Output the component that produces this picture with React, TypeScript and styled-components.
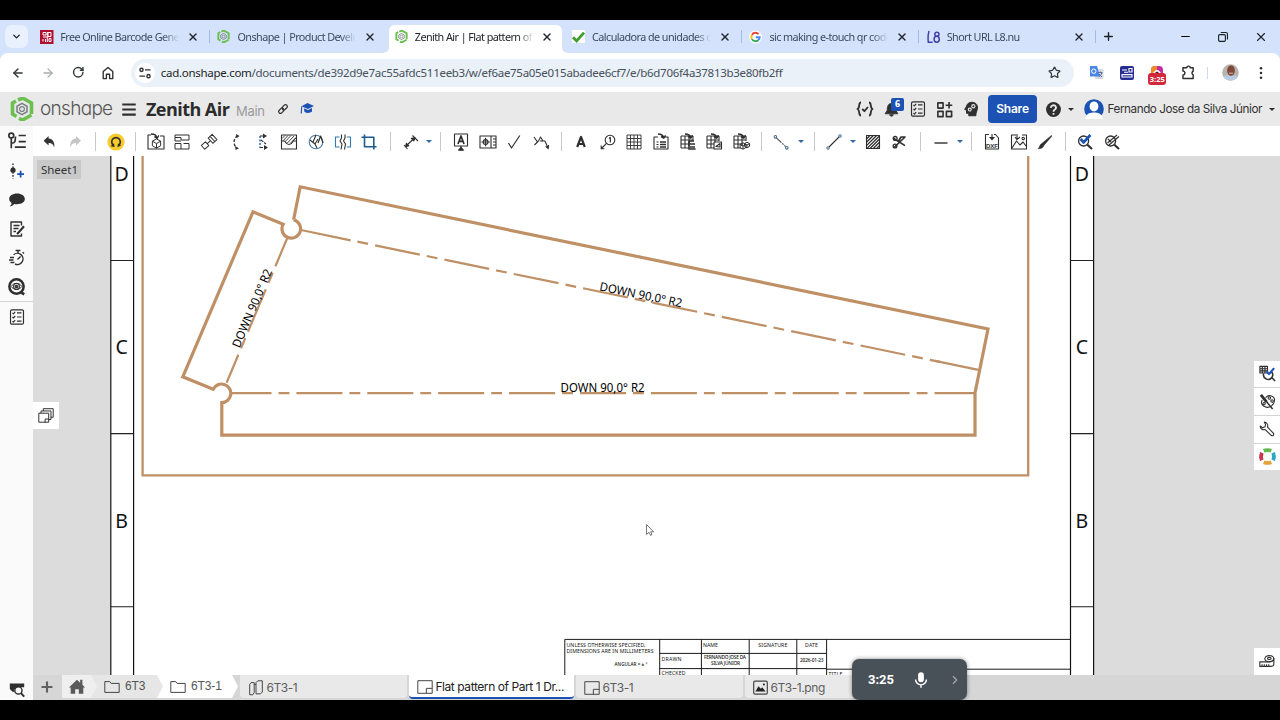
import React from "react";
import styled, { createGlobalStyle } from "styled-components";
import { ArrowLeft, ArrowRight, ChevronDown, ChevronRight, Minus, Plus, RotateCw, Star, X } from "lucide-react";

const INK = "#2f2f2f";
const BLUE = "#1b52b3";
const BROWN = "#bf9065";

const GlobalStyle = createGlobalStyle`
  * { box-sizing: border-box; }
  body { margin: 0; background: #000; font-family: "Noto Sans", "Open Sans", sans-serif; }
`;

/* ---------- shell ---------- */
const Screen = styled.div`
  width: 1280px;
  height: 720px;
  padding: 20px 0;
  background: #000;
  overflow: hidden;
  display: flex;
  flex-direction: column;
`;
const Center = styled.div<{ $w: number; $h?: number }>`
  flex: none;
  width: ${(p) => p.$w}px;
  height: ${(p) => (p.$h ? `${p.$h}px` : "100%")};
  display: flex;
  align-items: center;
  justify-content: center;
`;
const Spacer = styled.div`
  flex: 1;
`;
const Gap = styled.div<{ $w: number }>`
  flex: none;
  width: ${(p) => p.$w}px;
`;

/* ---------- browser tabs ---------- */
const TabStrip = styled.div`
  flex: none;
  height: 33px;
  background: #d4e2fb;
  display: flex;
  align-items: stretch;
`;
const TabSearch = styled.div`
  width: 23px;
  height: 23px;
  margin: 5px 3.6px 0 5px;
  border-radius: 7px;
  background: #e9f1fe;
  display: flex;
  align-items: center;
  justify-content: center;
`;
const BrowserTab = styled.div<{ $active?: boolean; $line?: boolean }>`
  position: relative;
  flex: none;
  width: 177.3px;
  height: 28px;
  margin-top: 5px;
  padding: 0 9px 4px 8.6px;
  display: flex;
  align-items: center;
  color: ${(p) => (p.$active ? "#202327" : "#3c4a5e")};
  &::after {
    content: "";
    position: absolute;
    right: -1px;
    top: 5px;
    width: 1px;
    height: 13px;
    background: ${(p) => (p.$line ? "#a5b9e2" : "transparent")};
  }
`;
const ActiveShape = styled.svg`
  position: absolute;
  left: -5px;
  top: 0;
`;
const TabIcon = styled.span`
  position: relative;
  flex: none;
  width: 14px;
  height: 14px;
  margin-right: 6px;
  display: flex;
`;
const TabText = styled.span`
  position: relative;
  flex: none;
  width: 120px;
  white-space: nowrap;
  font-size: 10.8px;
  letter-spacing: -0.56px;
  line-height: 16px;
  mask-image: linear-gradient(to right, #000 86%, transparent 99%);
`;
const TabClose = styled.span`
  position: relative;
  margin-left: 6.5px;
  width: 12px;
  height: 12px;
  display: flex;
  color: #22272e;
`;

/* ---------- address row ---------- */
const AddressWrap = styled.div`
  flex: none;
  height: 39px;
  background: #d4e2fb;
`;
const AddressRow = styled.div`
  height: 39px;
  background: #fff;
  border-radius: 8px 8px 0 0;
  padding-left: 3px;
  display: flex;
  align-items: center;
  color: #34383c;
`;
const UrlPill = styled.div`
  flex: none;
  width: 943px;
  height: 28px;
  margin-left: 7.8px;
  padding: 0 9px 0 4px;
  border-radius: 14px;
  background: #ebf1f8;
  display: flex;
  align-items: center;
`;
const SiteBadge = styled.div`
  width: 20px;
  height: 20px;
  border-radius: 50%;
  background: #fff;
  margin-right: 6px;
  display: flex;
  align-items: center;
  justify-content: center;
`;
const UrlText = styled.div`
  flex: 1;
  font-size: 11.5px;
  letter-spacing: -0.295px;
  color: #46505a;
  white-space: nowrap;
  b { font-weight: 400; color: #1b1f23; }
`;
const Rule = styled.div<{ $h: number; $c: string; $m?: string }>`
  flex: none;
  width: 1px;
  height: ${(p) => p.$h}px;
  background: ${(p) => p.$c};
  margin: ${(p) => p.$m ?? "0"};
`;
const RecExt = styled.div`
  position: relative;
  flex: none;
  width: 18px;
  height: 18px;
  margin: 0 6px 0 12.5px;
  svg { display: block; margin-top: 2px; }
`;
const RecBadge = styled.span`
  position: absolute;
  left: 0;
  top: 9px;
  width: 18px;
  height: 12px;
  border-radius: 3px;
  background: #d3273c;
  color: #fff;
  font: 700 7.5px/12px "Noto Sans", sans-serif;
  text-align: center;
`;

/* ---------- app header ---------- */
const Header = styled.header`
  flex: none;
  height: 34px;
  background: #e9e9e9;
  padding-left: 10px;
  display: flex;
  align-items: center;
`;
const Wordmark = styled.span`
  flex: none;
  width: 81px;
  padding-left: 6px;
  padding-bottom: 1px;
  font: 300 19px/24px Inter, sans-serif;
  font-feature-settings: "cv11";
  letter-spacing: -0.7px;
  color: #555;
`;
const DocTitle = styled.span`
  flex: none;
  width: 91px;
  margin-left: -5px;
  padding-left: 8px;
  white-space: nowrap;
  font: 700 18px/24px "Open Sans", sans-serif;
  letter-spacing: -0.55px;
  color: #2b2b2b;
`;
const Branch = styled.span`
  flex: none;
  width: 41px;
  padding-top: 3px;
  font: 400 13px/18px Inter, sans-serif;
  letter-spacing: -0.3px;
  color: #9b9b9b;
`;
const ShareButton = styled.div`
  flex: none;
  width: 49px;
  height: 28px;
  border-radius: 4px;
  background: ${BLUE};
  color: #fff;
  font: 600 12px/28px Inter, sans-serif;
  letter-spacing: -0.2px;
  text-align: center;
`;
const BellBox = styled.div`
  position: relative;
  flex: none;
  width: 26px;
  height: 34px;
  display: flex;
  align-items: center;
  justify-content: center;
`;
const BellCount = styled.span`
  position: absolute;
  left: 13px;
  top: 6px;
  width: 13px;
  height: 13px;
  border-radius: 2px;
  background: ${BLUE};
  color: #fff;
  font: 700 8px/13px "DejaVu Sans", sans-serif;
  text-align: center;
`;
const UserName = styled.span`
  flex: none;
  width: 156px;
  font: 400 11.7px/18px Inter, sans-serif;
  letter-spacing: -0.43px;
  white-space: nowrap;
  color: #333;
`;

/* ---------- workspace ---------- */
const Workspace = styled.div`
  flex: 1;
  min-height: 0;
  display: flex;
`;
const Rail = styled.nav`
  flex: none;
  width: 33px;
  background: #fafafa;
  display: flex;
  flex-direction: column;
  align-items: center;
`;
const RailRule = styled.div`
  width: 33px;
  height: 1px;
  background: #d2d2d2;
`;
const Main = styled.main`
  flex: 1;
  min-width: 0;
  display: flex;
  flex-direction: column;
`;
const Toolbar = styled.div`
  flex: none;
  height: 30px;
  padding: 1px 0 0 2.8px;
  background: #fff;
  display: flex;
  align-items: center;
`;
const SepCell = styled.div<{ $w: number }>`
  flex: none;
  width: ${(p) => p.$w}px;
  height: 19px;
  display: flex;
  justify-content: center;
  &::before {
    content: "";
    width: 1px;
    background: #c9c9c9;
  }
`;
const Triangle = styled.i<{ $c: string; $s: number }>`
  border: ${(p) => p.$s}px solid transparent;
  border-bottom: 0;
  border-top-color: ${(p) => p.$c};
`;
const Canvas = styled.section`
  position: relative;
  flex: 1;
  min-height: 0;
  background: #dcdcdc;
`;
const Drawing = styled.svg`
  display: block;
`;
const SheetTag = styled.div`
  position: absolute;
  left: 4px;
  top: 4px;
  width: 44px;
  height: 19px;
  padding-left: 1px;
  background: #c9c9c9;
  color: #333;
  font: 400 11.5px/20px "Noto Sans", sans-serif;
  text-align: center;
`;
const Dock = styled.div<{ $left?: boolean; $top: number }>`
  position: absolute;
  ${(p) => (p.$left ? "left: 0;" : "right: 0;")}
  top: ${(p) => p.$top}px;
  width: 26px;
  display: flex;
  flex-direction: column;
  gap: 1px;
  background: #d4d4d4;
`;
const DockTile = styled.div`
  height: 26.7px;
  background: #fff;
  display: flex;
  align-items: center;
  justify-content: center;
`;

/* ---------- document tabs ---------- */
const DocBar = styled.footer`
  flex: none;
  height: 25px;
  background: #d6d6d6;
  display: flex;
`;
const Crumb = styled.div<{ $w: number; $bg: string; $first?: boolean; $z: number }>`
  position: relative;
  z-index: ${(p) => p.$z};
  flex: none;
  width: ${(p) => p.$w}px;
  margin-right: -6px;
  height: 23px;
  background: ${(p) => p.$bg};
  clip-path: polygon(0 0, calc(100% - 6px) 0, 100% 50%, calc(100% - 6px) 100%, 0 100%);
  padding-left: ${(p) => (p.$first ? 6 : 12)}px;
  display: flex;
  align-items: center;
  gap: 4px;
  font: 400 12px/20px "Liberation Sans", sans-serif;
  letter-spacing: -0.1px;
  color: #555;
`;
const CrumbLabel = styled.span`
  padding-bottom: 2px;
`;
const DocTab = styled.div<{ $w: number; $active?: boolean; $ml: number }>`
  flex: none;
  width: ${(p) => p.$w}px;
  height: ${(p) => (p.$active ? 24 : 23)}px;
  margin-left: ${(p) => p.$ml}px;
  padding: ${(p) => (p.$active ? "2px 0 0 7px" : "2px 0 0 7px")};
  display: flex;
  align-items: center;
  gap: 1.4px;
  white-space: nowrap;
  border-radius: 0 0 4px 4px;
  background: ${(p) => (p.$active ? "#fff" : "#e9e9e9")};
  border-bottom: ${(p) => (p.$active ? `2px solid ${BLUE}` : "0")};
  color: ${(p) => (p.$active ? "#222" : "#5d5d5d")};
  font: 400 12px/20px Inter, sans-serif;
  letter-spacing: -0.42px;
`;
const Recorder = styled.div`
  position: absolute;
  z-index: 9;
  left: 819px;
  top: 503px;
  width: 115px;
  height: 41px;
  border-radius: 7px;
  background: #485058;
  box-shadow: 0 0 4px rgba(0, 0, 0, 0.45);
  display: flex;
  align-items: center;
  color: #fff;
  font: 700 13px/20px Roboto, sans-serif;
`;
const RecTime = styled.span`
  flex: none;
  width: 58px;
  padding-left: 16px;
`;

/* ---------- glyphs ---------- */
type GlyphProps = { s?: number; w?: number; c?: string; children: React.ReactNode };
const Glyph = ({ s = 20, w = 1.1, c = INK, children }: GlyphProps) => (
  <svg width={s} height={s} viewBox="-10 -10 20 20" fill="none" stroke={c} strokeWidth={w} strokeLinejoin="round">
    {children}
  </svg>
);
const Caret = ({ w, c = "#2f6aa5", s = 3.5 }: { w: number; c?: string; s?: number }) => (
  <Center $w={w} $h={20}>
    <Triangle $c={c} $s={s} />
  </Center>
);
const OnshapeMark = ({ s }: { s: number }) => (
  <svg width={s} height={s} viewBox="-12 -12 24 24" fill="none">
    <path d="M-4 -9 L0.5 -11 L9.5 -6 V5" stroke="#6cc04f" strokeWidth="3.6" />
    <path d="M9.5 6 L0.5 11 L-3 9.3" stroke="#6cc04f" strokeWidth="3.6" />
    <path d="M-5.5 7.5 L-9.5 5 V-6 L-6 -8" stroke="#6cc04f" strokeWidth="3.6" />
    <path d="M0 -5.6 L5 -2.8 V2.8 L0 5.6 L-5 2.8 V-2.8Z" stroke="#7b8288" strokeWidth="1.6" />
    <circle r="2.4" stroke="#7b8288" strokeWidth="1.3" />
  </svg>
);
const Cube = ({ x = 0, y = 0, r = 4 }: { x?: number; y?: number; r?: number }) => (
  <path
    transform={`translate(${x} ${y}) scale(${r})`}
    strokeWidth={1 / r}
    d="M0 -1 L.9 -.5 V.5 L0 1 L-.9 .5 V-.5Z M-.9 -.5 L0 0 L.9 -.5 M0 0 V1"
  />
);
const GridLines = () => <path d="M-7 -6 H5 M-7 -2 H5 M-7 2 H2 M-7 6 H0 M-7 -6 V6 M-3 -6 V6 M1 -6 V4 M5 -6 V-1" />;
const InArrow = () => <path d="M-3 -8 C0 -8 2 -7 2.5 -4.5 M0 -5.5 L2.8 -3.8 L4.6 -6.6" strokeWidth="1.5" />;
const PageCorner = () => (
  <Glyph s={18} w={1.1} c="#444">
    <path d="M-8 -7 H8 V7 H-8Z M1.5 7 V1.5 H8" />
  </Glyph>
);
const Folder = () => (
  <Glyph s={18} w={1.1} c="#444">
    <path d="M-8 6 V-6 H-2.5 L-1 -4 H8 V6Z" />
  </Glyph>
);

const tool = {
  undo: <Glyph><path fill="#333" stroke="none" d="M-5.4 -1.2 L-.4 -6 V-3.4 C3.6 -3.2 6 .5 5.2 5.4 C4.1 2 2.6 .9 -.4 1 V3.6Z" /></Glyph>,
  redo: <Glyph><path fill="#c4c4c4" stroke="none" d="M5 -1.2 L0 -6 V-3.4 C-4 -3.2 -6.4 .5 -5.6 5.4 C-4.5 2 -3 .9 0 1 V3.6Z" /></Glyph>,
  update: (
    <Glyph>
      <circle r="8.6" fill="#f6cb2a" stroke="none" />
      <path d="M-2.4 3.4 A4.3 4.3 0 1 1 2.4 3.4" strokeWidth="1.7" />
      <path d="M-5.4 4.2 L-1.4 5 L-2 1.2Z M1.4 5.2 L2 1.4 L5 3.6Z" fill={INK} stroke="none" />
    </Glyph>
  ),
  insertView: <Glyph><path d="M-5 -7 H-8 V7 H8 V-6 H4" /><Cube x={0.5} y={1.5} r={4.6} /><path d="M-5 -8 C-1 -8 0 -7 1 -4 M-1.6 -5.4 L1.2 -3.6 L2.8 -6.6" strokeWidth="1.3" /></Glyph>,
  projected: <Glyph w={1}><path d="M-7 -7 H7 V-2 H-1 V-4.5 H-7Z M-7 -4.5 V-1 H-1 M-7 1.5 H-1 V7 H-7Z M1.5 1.5 H7 V7 H-1" /></Glyph>,
  auxiliary: <Glyph w={1}><g transform="rotate(-42)"><path d="M-8 -2.5 H-2.5 V2.5 H-8Z M2 -3.5 H7.5 V3.5 H2Z M-2 0 H2 M4.6 -3.5 V3.5" /></g></Glyph>,
  section: <Glyph><path d="M2 -6 C-3 -5 -3 4 1 6" strokeDasharray="3 1.6" strokeWidth="1.3" /><path d="M0 -8 L3.5 -6 L.5 -3.8Z M-1 4.2 L3 6.2 L-.4 8Z" fill={INK} stroke="none" /></Glyph>,
  sectionAligned: <Glyph><path d="M-3 -6 V6" stroke={BLUE} strokeWidth="1.3" strokeDasharray="2 1.5" /><path d="M-3 -6 H1 M-3 5.5 H1 M-2 -2 L3 2" strokeDasharray="3 1" strokeWidth="1.1" /><path d="M0 -8.4 L4 -6 L0 -3.6Z M1 3 L5 5.6 L1 8Z" fill={INK} stroke="none" /></Glyph>,
  broken: <Glyph><path d="M-7.5 -7 H7.5 V7 H-7.5Z M-7.5 -1 H-4.5 C-3.5 -1 -3.5 2.5 0 2.5 C3.5 2.5 3.5 -1 4.5 -1 H7.5" /><path d="M-7 -3.5 L-4 -6.5 M-6 -1.2 L-1 -6.5 M-3.6 -.6 L2 -6.5 M-2 1.4 L5 -6 M1 1.6 L7 -4.6 M4 -1 L7 -4" strokeWidth=".9" /></Glyph>,
  detail: <Glyph><circle r="6.8" stroke="#4a7fa5" /><path d="M-6 -2 L-1 2 L2 -3 M0 -7 L-3 0 M-1 2 L1 6" /><path d="M2 1 L4.6 -6 L7 1" strokeWidth="1.2" /></Glyph>,
  breakView: <Glyph><path d="M-1.5 -7.5 V-4 L-3 -1 L-1 2 L-2 7.5 M2 -7.5 V-4 L.5 -1 L2.5 2 L1.5 7.5" /><path d="M-3.4 -5 H-7.5 V5 H-3.4 M3.8 -5 H7.5 V5 H3.8" stroke="#2c7ab5" /></Glyph>,
  crop: <Glyph><path d="M-4.5 -7.5 V4.8 H7.5 M-7.5 -4.8 H4.8 V7.5" stroke="#1d5c92" strokeWidth="1.6" /></Glyph>,
  dimension: <Glyph><path d="M-4.5 3.5 L3 -3.5 M-7 3 L-3.5 7 M1.5 -6.5 L7 -1" /><path d="M-5.4 4.6 L-4.6 1.4 L-2.2 3.8Z M4 -4.2 L.4 -3.6 L2.8 -1.2Z" fill={INK} /></Glyph>,
  note: <Glyph><path d="M-6.5 -8 H6.5 V4 H-6.5Z M0 4 V7" /><path d="M-3 2 L0 -6 L3 2 M-2 -.6 H2" strokeWidth="1.7" /><path d="M-2.4 8.2 L0 5.4 L2.4 8.2Z" fill={INK} /></Glyph>,
  gdt: <Glyph><path d="M-8 -6 H8 V6 H-8Z M3 -6 V6 M-6.5 0 H1.8 M-2.4 -4.2 V4.2 M5 -3 H8 M5 0 H8 M5 3 H8" /><circle cx="-2.4" r="2.4" /></Glyph>,
  surface: <Glyph><path d="M-5.5 1 L-2.5 6 L5.8 -6.5" strokeWidth="1.2" /></Glyph>,
  weld: <Glyph><path d="M-7 -5 L-3.5 0 L-6.5 3 M-3.5 0 C-2 -1 -1 -4 -.5 -5 L2 -1 M-1 -1 H4 L7 6 M4.6 4.4 L7.2 6.6 L7.6 3" /></Glyph>,
  text: <Glyph><path d="M-3.8 5 L0 -5 L3.8 5 M-2.6 2 H2.6" strokeWidth="2.2" /></Glyph>,
  balloon: <Glyph><circle cx="2" cy="-2" r="4.8" /><path d="M-1.6 1.4 L-6.5 6.5 M-6.8 3.6 V6.8 H-3.6" /><path d="M1 -3.6 L2.3 -4.6 V.6" strokeWidth="1.2" /></Glyph>,
  table: <Glyph w={0.9}><path d="M-7 -7 H7 V7 H-7Z M-7 -3.5 H7 M-7 0 H7 M-7 3.5 H7 M-3.5 -7 V7 M0 -7 V7 M3.5 -7 V7" /></Glyph>,
  bom: <Glyph><path d="M-3 -5 H-7 V7 H7 V-5 H4 M-4.5 0 H-2.5 M-4.5 2.5 H-2.5 M-4.5 5 H-2.5" /><path d="M-1 0 H5 M-1 2.5 H5 M-1 5 H5" strokeWidth="1.6" /><InArrow /></Glyph>,
  holeTable: <Glyph><GridLines /><InArrow /><path d="M1 -1 H6 M2 2 H7 M2 5 H7 M1 -1 V7 H7.6" strokeWidth="1.7" /></Glyph>,
  bendTable: <Glyph><GridLines /><InArrow /><path d="M0 0 H7.5 V7 H0Z" fill="#fff" /><path d="M2 4.5 L6 1.5 V5Z" /></Glyph>,
  partTable: <Glyph><GridLines /><InArrow /><Cube x={2} y={4} r={3.2} /><Cube x={6} y={3} r={2.8} /></Glyph>,
  centerline: <Glyph c="#4a6f8c"><path d="M-4.6 -4.2 L4.6 4.6" stroke="#444" strokeDasharray="7 1.2 1.6 1.2" /><circle cx="-5.6" cy="-5.2" r="1.3" /><circle cx="5.8" cy="5.8" r="1.3" /></Glyph>,
  line: <Glyph><path d="M-5 5 L5 -5" /><circle cx="-6" cy="6" r="1.2" stroke="#4a6f8c" /><circle cx="6" cy="-6" r="1.2" stroke="#4a6f8c" /></Glyph>,
  hatch: <Glyph><path d="M-6.5 -6.5 H6.5 V6.5 H-6.5Z" /><path d="M-6.5 -3 L-3 -6.5 M-6.5 .3 L.3 -6.5 M-6.5 3.6 L3.6 -6.5 M-6 6.4 L6.4 -6 M-3 6.5 L6.5 -3 M.3 6.5 L6.5 .3 M3.6 6.5 L6.5 3.6" strokeWidth="1.3" /></Glyph>,
  trim: <Glyph><path d="M-6 -4 L6 3.6 M-5 5.5 L6 -5 H2 L-1 0" strokeWidth="1.7" /><circle cx="-3.8" cy="-3.6" r="1.9" strokeWidth="1.3" /><circle cx="-4" cy="4" r="1.9" strokeWidth="1.3" /></Glyph>,
  stroke: <Glyph><path d="M-6.5 1 H6.5" strokeWidth="1.4" /></Glyph>,
  dxf: (
    <Glyph>
      <path d="M-3 -7.5 H-6.5 V7 H6.5 V-4 L3.5 -7.5 H2 M0 -8 V-3" strokeWidth="1.1" />
      <path d="M-3 -5 H3 L0 -1.4Z" fill={INK} stroke="none" />
      <text x="0" y="5.6" textAnchor="middle" fontFamily="Liberation Sans" fontWeight="700" fontSize="6" fill={INK} stroke="none">DXF</text>
    </Glyph>
  ),
  image: <Glyph><path d="M-3 -7 H-7.5 V7 H7.5 V-7 H3 M-7 6 L-2.5 -1 L1 3 L4 0 L7 4 M-2 -8 V-3 M-4 -5 L-2 -2.4 L1 -5" /><circle cx="4.2" cy="-3.6" r="1.2" /></Glyph>,
  brush: <Glyph><path d="M-7 6.6 C-5 5.5 -5.5 2.5 -3.2 1.6 L6.5 -6.6 L7 -6 L-1 3.2 C-2 6.4 -5 6.8 -7 6.6Z" fill={INK} strokeWidth=".6" /></Glyph>,
  inspect: <Glyph><circle cx="-1.4" cy="-1" r="5" strokeWidth="1.3" /><path d="M2.4 2.8 L7 7" strokeWidth="2.2" /><path d="M-4.4 -3 L-1.4 .4 L5.4 -7" stroke={BLUE} strokeWidth="2.8" /></Glyph>,
  inspectHide: <Glyph><circle cx="-1.4" cy="-1" r="5" strokeWidth="1.3" /><path d="M2.4 2.8 L7 7" strokeWidth="2.2" /><path d="M-4.5 1 L5 -7 M-3 3 L7 -5.5 M-4 -3 L-1 0" strokeWidth="1.2" /></Glyph>,
};

type ToolItem = keyof typeof tool | "|" | "||" | number;
const toolbarItems: ToolItem[] = [
  "undo", "redo", "|", "update", "|",
  "insertView", "projected", "auxiliary", "section", "sectionAligned", "broken", "detail", "breakView", "crop", "||",
  "dimension", 10, "|", "note", "gdt", "surface", "weld", "|",
  "text", "balloon", "table", "bom", "holeTable", "bendTable", "partTable", "|",
  "centerline", 13.2, "|", "line", 11.6, "hatch", "trim", "||", "stroke", 10.9, "|",
  "dxf", "image", "brush", "|", "inspect", "inspectHide",
];
const renderTool = (it: ToolItem, i: number) => {
  if (it === "|" || it === "||") return <SepCell key={i} $w={it === "|" ? 13.3 : 15} />;
  if (typeof it === "number") return <Caret key={i} w={it} />;
  return <Center key={i} $w={26.7} $h={28}>{tool[it]}</Center>;
};

const rail = {
  tree: <Glyph s={22} w={1.5}><circle cx="-5.2" cy="-5" r="2.2" /><path d="M-5.2 -2.8 V6.5 M-5.2 2 C-1.6 2 -1.4 0 -1.4 -4 M1.5 -5 H8 M1.5 .5 H8 M-2 5.5 H8" /></Glyph>,
  addPoint: <Glyph s={20} w={1.4}><path d="M-4 -7.5 V7.5" strokeDasharray="1.6 1.3" /><circle cx="-4" cy="-.8" r="2.6" fill={INK} stroke="none" /><path d="M3.6 -.2 V6.6 M.2 3.2 H7" stroke={BLUE} strokeWidth="1.8" /></Glyph>,
  chat: <Glyph s={20}><path d="M0 -6.5 C4.5 -6.5 7.8 -4.2 7.8 -1 C7.8 2.2 4.5 4.2 0 4.2 C-1 4.2 -2 4.1 -2.8 3.9 C-4 5.3 -5.6 6.2 -7.4 6.3 C-6 5 -5.4 4 -5.4 2.9 C-7 1.9 -7.8 .6 -7.8 -1 C-7.8 -4.2 -4.5 -6.5 0 -6.5Z" fill={INK} stroke="none" /></Glyph>,
  edit: <Glyph s={20} w={1.4}><path d="M4.5 -3.5 V-7 H-6 V7 H4.5 V4.5 M-3.5 -3.5 H2.5 M-3.5 -.5 H1.5 M-3.5 2.5 H-1" /><path d="M7 -2.8 L1.5 3.6 L0 5" strokeWidth="2.2" /></Glyph>,
  timer: <Glyph s={20} w={1.4}><path d="M-3.4 -3.2 A5.6 5.6 0 1 1 -2 6 M1 -5 V-7.5 M-1.4 -7.5 H3.4 M5.6 -5.8 L7 -4.4 M.5 1.5 L3.6 -1.4 M-7 -.5 H-3 M-8 2 H-3.5 M-6.5 4.5 H-2.6" /></Glyph>,
  view: <Glyph s={21} w={1.4}><circle r="6.8" strokeWidth="2.4" /><path d="M4 5.6 L7.4 7.4" strokeWidth="2.6" /><circle r="2.8" strokeWidth="1" /><circle r="1" /><path d="M-5 0 C-3 -4 3 -4 5 0 C3 3.6 -3 3.6 -5 0" strokeWidth=".9" /></Glyph>,
  list: <Glyph s={18} w={1.3}><rect x="-7.2" y="-8" width="14.4" height="16" rx="1.6" /><path d="M-5 -4.5 L-4 -3.4 L-2 -5.6 M-5 0 L-4 1.1 L-2 -1.1 M-5 4.5 L-4 5.6 L-2 3.4 M0 -4.5 H5 M0 0 H5 M0 4.5 H5" /></Glyph>,
  find: <Glyph s={18}><path d="M-8 -6 H8 V-2 H4 V0 H-3 V3 H-5 L-8 0Z" fill={INK} stroke="none" /><circle cx="1.6" cy="1.6" r="4" fill="#fafafa" strokeWidth="1.6" /><path d="M4.4 4.6 L8 8.4" strokeWidth="2.2" /></Glyph>,
};

/* ---------- browser chrome ---------- */
const favicon = {
  barcode: <svg width="14" height="14" viewBox="0 0 14 14"><rect width="13.5" height="14" fill="#b01030" /><path d="M3 2.5H6V5H3ZM8 2.5H11V6.5H8ZM3 7H7M9 8.5H11V11.5H9ZM3 9V11.5M5.5 9V12M7.3 2V12" stroke="#fff" fill="none" /></svg>,
  onshape: <OnshapeMark s={13} />,
  check: <svg width="14" height="14" viewBox="0 0 14 14"><rect width="13" height="13" fill="#fff" /><path d="M1 7.2 L4.6 11 L12 2.6" stroke="#3f9e2c" strokeWidth="2.8" fill="none" /></svg>,
  google: (
    <svg width="14" height="14" viewBox="0 0 14 14">
      <circle cx="6.5" cy="7" r="6.5" fill="#fff" />
      <g fill="none" strokeWidth="1.9">
        <path d="M9.6 4.1 A4.2 4.2 0 0 0 2.9 4.9" stroke="#e94335" />
        <path d="M2.9 4.9 A4.2 4.2 0 0 0 2.9 9.1" stroke="#fbbc05" />
        <path d="M2.9 9.1 A4.2 4.2 0 0 0 9.3 10.2" stroke="#34a853" />
        <path d="M9.3 10.2 A4.2 4.2 0 0 0 10.7 7.2 H6.8" stroke="#4285f4" />
      </g>
    </svg>
  ),
  l8: <svg width="15" height="14" viewBox="0 0 15 14" fill="none" stroke="#4340a8" strokeWidth="1.6" strokeLinecap="round"><path d="M2 1 C1 5 1 9 1.4 12.6 H5.5" /><circle cx="10.6" cy="4" r="2.2" /><ellipse cx="10.4" cy="9.4" rx="2.8" ry="3.1" /></svg>,
};
const browserTabs: { icon: keyof typeof favicon; title: string; active?: boolean; line?: boolean }[] = [
  { icon: "barcode", title: "Free Online Barcode Gener", line: true },
  { icon: "onshape", title: "Onshape | Product Develop" },
  { icon: "onshape", title: "Zenith Air | Flat pattern of P", active: true },
  { icon: "check", title: "Calculadora de unidades d", line: true },
  { icon: "google", title: "sic making e-touch qr code", line: true },
  { icon: "l8", title: "Short URL L8.nu", line: true },
];

const Browser = () => (
  <>
    <TabStrip>
      <TabSearch><ChevronDown size={11} strokeWidth={3} color="#1c2026" /></TabSearch>
      {browserTabs.map((t) => (
        <BrowserTab key={t.title} $active={t.active} $line={t.line}>
          {t.active && (
            <ActiveShape width="188" height="28" viewBox="0 0 188 28">
              <path d="M0 28 C6 28 8 26 8 21 V7 C8 2 10 0 15 0 H174 C179 0 181 2 181 7 V21 C181 26 183 28 188 28Z" fill="#fff" />
            </ActiveShape>
          )}
          <TabIcon>{favicon[t.icon]}</TabIcon>
          <TabText>{t.title}</TabText>
          <TabClose><X size={12} strokeWidth={2.8} /></TabClose>
        </BrowserTab>
      ))}
      <Center $w={27}><Plus size={13} strokeWidth={2.6} color="#1c2026" /></Center>
      <Spacer />
      <Center $w={38}><Minus size={13} strokeWidth={2.2} /></Center>
      <Center $w={38}>
        <Glyph s={16} w={1.4} c="#1c2026"><rect x="-5.5" y="-3" width="8.5" height="8.5" rx="1.6" /><path d="M-2.8 -5.6 H3.4 Q5.6 -5.6 5.6 -3.4 V3" /></Glyph>
      </Center>
      <Center $w={38}><X size={14} strokeWidth={1.9} color="#1c2026" /></Center>
    </TabStrip>
    <AddressWrap>
      <AddressRow>
        <Center $w={30}><ArrowLeft size={14} strokeWidth={2.5} /></Center>
        <Center $w={30}><ArrowRight size={14} strokeWidth={2.2} color="#a9adb1" /></Center>
        <Center $w={30}><RotateCw size={12.5} strokeWidth={2.8} /></Center>
        <Center $w={30}>
          <Glyph s={16} w={1.7}><path d="M-6 7 V-2 L0 -7 L6 -2 V7 H2 V1.5 H-2 V7Z" /></Glyph>
        </Center>
        <UrlPill>
          <SiteBadge>
            <Glyph s={14} w={2}><circle cx="-5" cy="-4.5" r="2.3" /><path d="M0 -4.5 H8 M-8 4.5 H0" /><circle cx="5" cy="4.5" r="2.3" /></Glyph>
          </SiteBadge>
          <UrlText><b>cad.onshape.com</b>/documents/de392d9e7ac55afdc511eeb3/w/ef6ae75a05e015abadee6cf7/e/b6d706f4a37813b3e80fb2ff</UrlText>
          <Center $w={20}><Star size={13} strokeWidth={2.2} /></Center>
        </UrlPill>
        <Center $w={45}>
          <svg width="15" height="15" viewBox="0 0 15 15">
            <rect x="6" y="4" width="8.5" height="10" rx="1" fill="#d6dbe3" />
            <path d="M1 1H8L11 11.5H1Z" fill="#4a86e8" />
            <circle cx="4.8" cy="6.2" r="2.2" stroke="#fff" fill="none" />
            <path d="M9 7.5H13.5M11.2 6.5V7.5M12.8 8C12 10.5 10.5 11.5 9.8 12M10 9L13 12" stroke="#5b6f95" fill="none" />
          </svg>
        </Center>
        <Center $w={17}>
          <svg width="14" height="14" viewBox="0 0 14 14"><rect width="14" height="14" rx="2" fill="#262c92" /><path d="M2 4H7M2 8.6H12V11H2ZM9 2.5H12V6H9ZM4 6.3H8" stroke="#fff" fill="none" strokeWidth="1.1" /></svg>
        </Center>
        <RecExt>
          <svg width="18" height="10" viewBox="0 0 18 10"><path d="M3 10V4Q3 0 7 0H11Q15 0 15 4V10Z" fill="#c32aa3" /><path d="M3 10V4Q3 0 7 0H9V10Z" fill="#f08a24" /><path d="M4 9Q9 -1 14 9Z" fill="#fff" /><path d="M6 9Q9 2 12 9Z" fill="#222" /></svg>
          <RecBadge>3:25</RecBadge>
        </RecExt>
        <Center $w={33}>
          <Glyph s={17} w={1.7}><path d="M-6.5 -5.5 H-2 A2 2 0 0 1 2 -5.5 H5.5 V-1.5 A2.2 2.2 0 0 0 5.5 2.6 V7 H-6.5 V3 A2.3 2.3 0 0 0 -6.5 -1.6Z" /></Glyph>
        </Center>
        <Rule $h={12} $c="#c9d7ef" $m="0 14px 0 2px" />
        <svg width="17" height="17" viewBox="0 0 17 17">
          <clipPath id="face"><circle cx="8.5" cy="8.5" r="8.3" /></clipPath>
          <g clipPath="url(#face)">
            <rect width="17" height="17" fill="#b9b3ae" />
            <path d="M0 17 C0 11 5 10.5 8.5 12 C12 10.5 17 11 17 17Z" fill="#b7cbe2" />
            <ellipse cx="9" cy="6.5" rx="3.9" ry="5.2" fill="#7d4a3a" />
            <path d="M7 9.2H11" stroke="#d9b8a8" />
          </g>
        </svg>
        <Spacer />
        <Center $w={38}>
          <Glyph s={16}><g fill={INK} stroke="none"><circle cy="-6" r="1.6" /><circle r="1.6" /><circle cy="6" r="1.6" /></g></Glyph>
        </Center>
      </AddressRow>
    </AddressWrap>
  </>
);

const AppHeader = () => (
  <Header>
    <OnshapeMark s={24} />
    <Wordmark>onshape</Wordmark>
    <Center $w={28}><Glyph s={18} w={2.4}><path d="M-7.5 -5 H7.5 M-7.5 .6 H7.5 M-7.5 6.2 H7.5" /></Glyph></Center>
    <DocTitle>Zenith Air</DocTitle>
    <Gap $w={7} />
    <Branch>Main</Branch>
    <Center $w={12}>
      <Glyph s={16} w={2}><g transform="rotate(-45)"><rect x="-9" y="-3" width="10" height="6" rx="3" /><rect x="-1" y="-3" width="10" height="6" rx="3" /></g></Glyph>
    </Center>
    <Center $w={35}>
      <svg width="14" height="14" viewBox="0 0 14 14" fill={BLUE}><path d="M7.5 1 L14 4 L8 7 L1.5 4.2Z" /><path d="M4 6.2 L8 8 L12 6 V9.6 C10 11.4 6.5 11.4 4.4 9.8Z" /><path d="M1.8 4.4 L1.2 11.5" stroke={BLUE} strokeWidth="1.1" /></svg>
    </Center>
    <Spacer />
    <Center $w={27}>
      <Glyph s={20} w={1.8}><path d="M-4 -6.5 C-7 -6.5 -4.6 -1 -7.6 0 C-4.6 1 -7 6.5 -4 6.5 M4 -6.5 C7 -6.5 4.6 -1 7.6 0 C4.6 1 7 6.5 4 6.5 M-2.8 0 L-.6 2.2 L3 -2" /></Glyph>
    </Center>
    <BellBox>
      <Glyph s={17}><path d="M0 -7 C4.5 -7 4.8 -3 5 1 L7.5 5 H-7.5 L-5 1 C-4.8 -3 -4.5 -7 0 -7Z M-2.2 6.2 H2.2 A2.3 2.3 0 0 1 -2.2 6.2Z" fill={INK} /></Glyph>
      <BellCount>6</BellCount>
    </BellBox>
    <Center $w={27}>{rail.list}</Center>
    <Center $w={27}><Glyph s={19} w={1.7}><path d="M-7 -7 H-1.5 V-1.5 H-7Z M-7 2 H-1.5 V7.5 H-7Z M2 2 H7.5 V7.5 H2Z M4.8 -8 V-1 M1.2 -4.5 H8.2" /></Glyph></Center>
    <Center $w={26}>
      <Glyph s={18}><path d="M1 -7.5 C6 -7.5 8 -3.5 7 .5 C6.6 2.5 5.4 3.6 5.4 7.5 H-2.5 V4.8 H-5 V1.5 L-7 .5 L-5 -3 C-4.4 -6 -2 -7.5 1 -7.5Z" fill={INK} /><circle cx="2.6" cy="-3" r="1.8" stroke="#e9e9e9" strokeWidth="1.3" /><circle cx="-1.4" cy=".6" r="1.6" stroke="#e9e9e9" strokeWidth="1.3" /></Glyph>
    </Center>
    <Gap $w={4} />
    <ShareButton>Share</ShareButton>
    <Center $w={33}>
      <Glyph s={19}><circle r="7.8" fill={INK} stroke="none" /><path d="M-2.6 -1.8 A2.6 2.4 0 1 1 1.4 0 C.2 .7 0 1 0 2.4 M0 3.6 V5.4" stroke="#e9e9e9" strokeWidth="1.9" /></Glyph>
    </Center>
    <Caret w={2} c={INK} s={3.2} />
    <Center $w={35.5}>
      <Spacer />
      <svg width="20" height="20" viewBox="-10 -10 20 20"><circle r="9.8" fill={BLUE} /><ellipse cy="-2.6" rx="4.4" ry="5" fill="#fff" /><path d="M-8.6 10 C-8.6 4 -3 3.4 0 3.4 C3 3.4 8.6 4 8.6 10Z" fill="#fff" /></svg>
      <Gap $w={4} />
    </Center>
    <UserName>Fernando Jose da Silva Júnior</UserName>
    <Caret w={16.5} c={INK} s={3.2} />
  </Header>
);

/* ---------- drawing sheet ---------- */
const LABEL = "DOWN 90,0° R2";
const Sheet = () => (
  <Drawing width="1247" height="519" viewBox="33 156 1247 519" fontFamily="Noto Sans, sans-serif">
    <rect x="110" y="156" width="984" height="519" fill="#fff" />
    <path d="M110.8 156 V675 M133.6 156 V675 M1070.5 156 V675 M1093.6 156 V675" stroke="#111" strokeWidth="1.2" />
    <path d="M110.5 260.5 H133.5 M110.5 433.6 H133.5 M110.5 606.8 H133.5 M1070.5 260.5 H1093.5 M1070.5 433.6 H1093.5 M1070.5 606.8 H1093.5" stroke="#222" strokeWidth="1.1" />
    <g fontSize="19.5" textAnchor="middle" fill="#111">
      {[["D", 181], ["C", 354], ["B", 527.6]].map(([ch, y]) => (
        <React.Fragment key={ch}>
          <text x="121.6" y={y}>{ch}</text>
          <text x="1081.8" y={y}>{ch}</text>
        </React.Fragment>
      ))}
    </g>
    <path d="M142.6 156 V475.4 H1028.2 V156" fill="none" stroke={BROWN} strokeWidth="2.3" />
    <g fill="none" stroke={BROWN}>
      <path
        strokeWidth="3.2"
        d="M293.6 219.8 L300.2 186.8 L988 329 L975 393 V435.2 H221.8 V402.6 A9.3 9.3 0 1 0 213.2 389.2 L182.8 376.8 L253 211.8 L283.2 224.2 A9.3 9.3 0 1 0 293.6 219.8"
      />
      <g strokeWidth="2.2">
        <path d="M231 393.1 H975" strokeDasharray="46 7 10.9 7" strokeDashoffset="5.5" />
        <path d="M301 230 L350.6 240.3" />
        <path d="M357.4 241.7 L940 361.9" strokeDasharray="10.9 7.2 45.6 7.1" />
        <path d="M935 360.9 L979.6 370.1" />
        <path d="M287.6 237.2 L226.6 382.8" strokeDasharray="31.5 7 11 7 46 7 11 7 40" />
      </g>
    </g>
    <g fontSize="11.8" fill="#000">
      <text x="560.6" y="391.6" textLength="84" lengthAdjust="spacingAndGlyphs">{LABEL}</text>
      <text textLength="84" lengthAdjust="spacingAndGlyphs" transform="translate(599 290.3) rotate(11.7)">{LABEL}</text>
      <text textLength="84" lengthAdjust="spacingAndGlyphs" transform="translate(239.6 348.4) rotate(-67)">{LABEL}</text>
    </g>
    <path d="M564.8 675 V639.4 H1070 M659.7 639.4 V675 M701.4 639.4 V675 M749.2 639.4 V675 M796.8 639.4 V675 M826.6 639.4 V675 M659.7 653.4 H826.6 M659.7 668.6 H826.6 M826.6 669.2 H1070" fill="none" stroke="#1a1a1a" strokeWidth="1" />
    <g fontSize="5.2" fill="#111">
      <text x="566.5" y="646.6" textLength="79">UNLESS OTHERWISE SPECIFIED,</text>
      <text x="566.5" y="652.8" textLength="87">DIMENSIONS ARE IN MILLIMETERS</text>
      <text x="614.5" y="665.6" fontSize="4.6" fontWeight="500" textLength="33">ANGULAR = ± °</text>
      <text x="703" y="646.8" textLength="15">NAME</text>
      <text x="758.3" y="646.8" textLength="29">SIGNATURE</text>
      <text x="805" y="646.8" textLength="13">DATE</text>
      <text x="661.5" y="661" textLength="20">DRAWN</text>
      <text x="661.5" y="675" textLength="24">CHECKED</text>
      <text x="704" y="658.8" fontSize="4.8" fontWeight="500" textLength="42">FERNANDO JOSE DA</text>
      <text x="711" y="665" fontSize="4.8" fontWeight="500" textLength="29">SILVA JÚNIOR</text>
      <text x="800" y="662.4" fontSize="4.8" fontWeight="500" textLength="23.6">2026-01-23</text>
      <text x="828.5" y="675.6" textLength="14">TITLE</text>
    </g>
    <path d="M646.5 524.5 V534.5 L649 532.4 L650.6 535.4 L652 534.6 L650.6 531.8 H653.6Z" fill="#fff" stroke="#555" strokeWidth=".8" />
  </Drawing>
);

const dockIcons = [
  <Glyph s={19} key="a"><path d="M-8 -7.5 H0 V-.5 H-8Z M-8 -5 H0 M-8 -2.8 H0 M-5.4 -7.5 V-.5 M-2.7 -7.5 V-.5" strokeWidth="1.2" /><path d="M-4 0 A4.8 4.8 0 1 0 4 -2 M4 3.6 L8 7.8" strokeWidth="1.6" /><path d="M-1 -2.5 L1.6 .6 L7 -5.6" stroke={BLUE} strokeWidth="2.2" /></Glyph>,
  <Glyph s={19} key="b"><path d="M-2 -4 C1 -8 8 -6 7.4 -1 C7 4 2 7.5 -2.6 5.6 C-6.5 4 -7 1 -5.6 -1.6" strokeWidth="1.1" /><circle cx="2" cy="-3.8" r="1.3" /><circle cx="4.8" cy="-.6" r="1.3" /><circle cx="-3.6" cy="2.2" r="1.2" /><path d="M-7 -7 L-1 .4" strokeWidth="3" /><path d="M-2 -1 L5.4 8" strokeWidth="1.6" /></Glyph>,
  <Glyph s={18} key="c" w={1.2}><path d="M-3 -7.6 C-.4 -7.6 1.6 -4.8 .6 -2 L7 4.6 C8.4 6.4 6.4 8.4 4.6 7 L-2 .6 C-5 1.6 -7.8 -.6 -7.6 -3.4 L-5 -1.4 L-2.2 -2.4 L-1.6 -5Z" /></Glyph>,
  <Glyph s={19} key="d" w={4}><path d="M-4 -6 Q0 -7.6 4 -6" stroke="#63b94b" /><path d="M6 -4 Q7.6 0 6 4" stroke="#27a9c6" /><path d="M4 6 Q0 7.6 -4 6" stroke="#e3a43a" /><path d="M-6 4 Q-7.6 0 -6 -4" stroke="#c5374f" /></Glyph>,
];

const DocTabs = () => (
  <DocBar>
    <Center $w={28.6} $h={24}><Plus size={16} strokeWidth={3.2} color="#606060" /></Center>
    <Crumb $w={35.4} $bg="#efefef" $first $z={4}>
      <Glyph s={18}><path d="M-9 .5 L0 -8 L3.5 -4.8 V-8 H6 V-2.4 L9 .5 H7 V7.5 H2 V2.5 H-2 V7.5 H-7 V.5Z" fill="#5a5a5a" stroke="none" /></Glyph>
    </Crumb>
    <Crumb $w={72} $bg="#e6e6e6" $z={3}><Folder /><CrumbLabel>6T3</CrumbLabel></Crumb>
    <Crumb $w={81} $bg="#ffffff" $z={2}><Folder /><CrumbLabel>6T3-1</CrumbLabel></Crumb>
    <DocTab $w={167} $ml={8}>
      <Glyph s={18} c="#444"><path d="M-7 -4 L-5.5 -6 H-2 V5 L-3.5 7.5 H-7Z M-2 -4 H0 M0 -6 L2 -8 H7 V4.5 L5 6.5 H0Z" /></Glyph>6T3-1
    </DocTab>
    <DocTab $w={165} $ml={2} $active><PageCorner />Flat pattern of Part 1 Dr...</DocTab>
    <DocTab $w={167} $ml={2}><PageCorner />6T3-1</DocTab>
    <DocTab $w={121} $ml={2}>
      <Glyph s={17} w={1.4} c="#444"><rect x="-8" y="-7.6" width="16" height="15.4" rx="1.6" /><path d="M-6 4.6 L-2.4 -1.6 L.4 1.4 L2 -.2 L6 4.6Z" fill="#222" stroke="none" /><circle cx="4" cy="-3.6" r="1.2" fill="#222" stroke="none" /></Glyph>6T3-1.png
    </DocTab>
  </DocBar>
);

export default function App() {
  return (
    <Screen>
      <GlobalStyle />
      <Browser />
      <AppHeader />
      <Workspace>
        <Rail>
          <Center $w={33} $h={30}>{rail.tree}</Center>
          <Center $w={33} $h={29}>{rail.addPoint}</Center>
          <Center $w={33} $h={29}>{rail.chat}</Center>
          <Center $w={33} $h={29}>{rail.edit}</Center>
          <Center $w={33} $h={29}>{rail.timer}</Center>
          <Center $w={33} $h={29}>{rail.view}</Center>
          <RailRule />
          <Center $w={33} $h={29}>{rail.list}</Center>
          <Spacer />
          <Center $w={33} $h={23}>{rail.find}</Center>
        </Rail>
        <Main>
          <Toolbar>{toolbarItems.map(renderTool)}</Toolbar>
          <Canvas>
            <Sheet />
            <SheetTag>Sheet1</SheetTag>
            <Dock $left $top={246}>
              <DockTile>
                <Glyph s={18}><path d="M-8 -2 H3 V8 H-8Z M-5.5 -2 V-4.5 H5.5 V5 H3 M-3 -4.5 V-7 H8 V2.5 H5.5 M-1 8 V4.5 H3" /></Glyph>
              </DockTile>
            </Dock>
            <Dock $top={204.5}>
              {dockIcons.map((ic, i) => <DockTile key={i}>{ic}</DockTile>)}
            </Dock>
            <Dock $top={492}>
              <DockTile>
                <Glyph s={18} w={1.2}><path d="M-8 1 H1 C5 1 7.6 0 7.6 -3 V3.5 C7.6 5 6 6 4 6 H-8Z M-5.5 6 V3.6 M-3 6 V3.6 M-.5 6 V3.6 M2 6 V3.6" /><ellipse cx="2.6" cy="-2.6" rx="5" ry="3.4" /><ellipse cx="2.6" cy="-2.8" rx="2" ry="1.2" /></Glyph>
              </DockTile>
            </Dock>
            <Recorder>
              <RecTime>3:25</RecTime>
              <Center $w={22}>
                <Glyph s={18} c="#fff" w={1.6}><rect x="-3.2" y="-8.5" width="6.4" height="11" rx="3.2" fill="#fff" stroke="none" /><path d="M-6 -.6 A6 6 0 0 0 6 -.6 M0 5.2 V8.6" /></Glyph>
              </Center>
              <Gap $w={10} />
              <Center $w={25}><ChevronRight size={14} strokeWidth={2} color="#a4aab0" /></Center>
            </Recorder>
          </Canvas>
          <DocTabs />
        </Main>
      </Workspace>
    </Screen>
  );
}
